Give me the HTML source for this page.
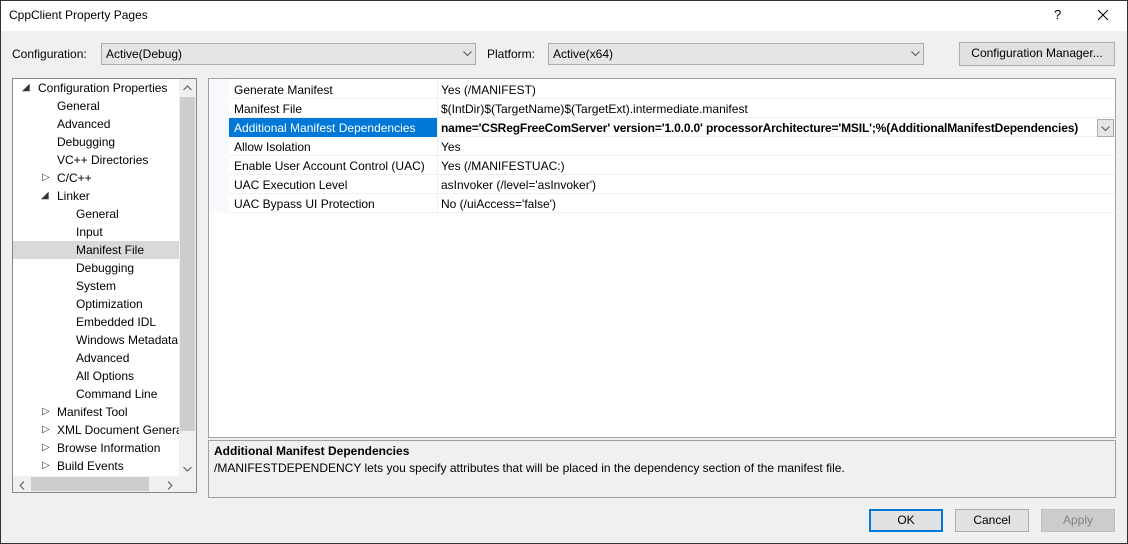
<!DOCTYPE html>
<html><head><style>
*{margin:0;padding:0;box-sizing:border-box}
body{width:1128px;height:544px;background:#f0f0f0;font-family:"Liberation Sans",sans-serif;font-size:12px;color:#000;position:relative;overflow:hidden}
.a{position:absolute;white-space:nowrap}
.win{position:absolute;left:0;top:0;width:1128px;height:544px;border:1px solid #333;}
.combo{position:absolute;background:#e5e5e5;border:1px solid #adadad;height:22px;padding:3px 4px}
.btn{position:absolute;background:#e1e1e1;border:1px solid #adadad;height:23px;text-align:center;line-height:21px}
.tree div{position:absolute;white-space:nowrap;height:18px;line-height:18px}
.row{position:absolute;left:229px;width:886px;height:19px;border-bottom:1px solid #f0f0f0;line-height:20px}
.row span{position:absolute;left:5px}
.row b{position:absolute;left:212px;font-weight:normal}
.tri{font-size:10px;color:#333}
</style></head><body>
<div class="win"></div>
<div class="a" style="left:1px;top:1px;width:1126px;height:30px;background:#fff"></div>
<div class="a" style="left:9px;top:8px;font-size:12px">CppClient Property Pages</div>
<div class="a" style="left:1054px;top:7px;font-size:13px">?</div>
<svg class="a" style="left:1097px;top:9px" width="12" height="12"><path d="M1 1L11 11M11 1L1 11" stroke="#000" stroke-width="1"/></svg>

<div class="a" style="left:12px;top:47px">Configuration:</div>
<div class="combo" style="left:101px;top:43px;width:375px">Active(Debug)</div>
<svg class="a" style="left:463px;top:51px" width="9" height="6"><path d="M0.5 0.5L4.5 4.5L8.5 0.5" stroke="#555" fill="none"/></svg>
<div class="a" style="left:487px;top:47px">Platform:</div>
<div class="combo" style="left:548px;top:43px;width:376px">Active(x64)</div>
<svg class="a" style="left:911px;top:51px" width="9" height="6"><path d="M0.5 0.5L4.5 4.5L8.5 0.5" stroke="#555" fill="none"/></svg>
<div class="btn" style="left:959px;top:42px;width:156px;height:24px">Configuration Manager...</div>

<div class="a" style="left:12px;top:78px;width:185px;height:415px;border:1px solid #828790;background:#fff"></div>
<div class="a" style="left:179px;top:79px;width:17px;height:397px;background:#f0f0f0"></div>
<div class="a" style="left:180px;top:97px;width:15px;height:334px;background:#cdcdcd"></div>
<svg class="a" style="left:183px;top:85px" width="9" height="6"><path d="M0.5 5L4.5 1L8.5 5" stroke="#555" fill="none"/></svg>
<svg class="a" style="left:183px;top:466px" width="9" height="6"><path d="M0.5 1L4.5 5L8.5 1" stroke="#555" fill="none"/></svg>
<div class="a" style="left:13px;top:476px;width:183px;height:16px;background:#f0f0f0"></div>
<div class="a" style="left:31px;top:477px;width:118px;height:14px;background:#cdcdcd"></div>
<svg class="a" style="left:19px;top:481px" width="6" height="9"><path d="M5 0.5L1 4.5L5 8.5" stroke="#555" fill="none"/></svg>
<svg class="a" style="left:167px;top:481px" width="6" height="9"><path d="M1 0.5L5 4.5L1 8.5" stroke="#555" fill="none"/></svg>
<div class="a" style="left:13px;top:241px;width:166px;height:18px;background:#d9d9d9"></div>
<div class="tree">
<div class="tri" style="left:22px;top:79px">◢</div><div style="left:38px;top:79px">Configuration Properties</div>
<div style="left:57px;top:97px">General</div>
<div style="left:57px;top:115px">Advanced</div>
<div style="left:57px;top:133px">Debugging</div>
<div style="left:57px;top:151px">VC++ Directories</div>
<div class="tri" style="left:42px;top:169px">▷</div><div style="left:57px;top:169px">C/C++</div>
<div class="tri" style="left:41px;top:187px">◢</div><div style="left:57px;top:187px">Linker</div>
<div style="left:76px;top:205px">General</div>
<div style="left:76px;top:223px">Input</div>
<div style="left:76px;top:241px">Manifest File</div>
<div style="left:76px;top:259px">Debugging</div>
<div style="left:76px;top:277px">System</div>
<div style="left:76px;top:295px">Optimization</div>
<div style="left:76px;top:313px">Embedded IDL</div>
<div style="left:76px;top:331px;width:103px;overflow:hidden">Windows Metadata</div>
<div style="left:76px;top:349px">Advanced</div>
<div style="left:76px;top:367px">All Options</div>
<div style="left:76px;top:385px">Command Line</div>
<div class="tri" style="left:42px;top:403px">▷</div><div style="left:57px;top:403px">Manifest Tool</div>
<div class="tri" style="left:42px;top:421px">▷</div><div style="left:57px;top:421px;width:122px;overflow:hidden">XML Document Generator</div>
<div class="tri" style="left:42px;top:439px">▷</div><div style="left:57px;top:439px">Browse Information</div>
<div class="tri" style="left:42px;top:457px">▷</div><div style="left:57px;top:457px">Build Events</div>
</div>

<div class="a" style="left:208px;top:78px;width:908px;height:360px;border:1px solid #a0a0a0;background:#fff"></div>
<div class="a" style="left:209px;top:79px;width:20px;height:134px;background:#f7f9fc"></div>
<div class="a" style="left:437px;top:80px;width:1px;height:133px;background:#f0f0f0"></div>
<div class="row" style="top:80px"><span>Generate Manifest</span><b>Yes (/MANIFEST)</b></div>
<div class="row" style="top:99px"><span>Manifest File</span><b>$(IntDir)$(TargetName)$(TargetExt).intermediate.manifest</b></div>
<div class="row" style="top:118px"><div class="a" style="left:0;top:0;width:208px;height:19px;background:#0078d7"></div><span style="color:#fff">Additional Manifest Dependencies</span><b style="font-weight:bold;letter-spacing:-0.15px">name='CSRegFreeComServer' version='1.0.0.0' processorArchitecture='MSIL';%(AdditionalManifestDependencies)</b></div>
<div class="a" style="left:1097px;top:119px;width:17px;height:18px;background:#e5e5e5;border:1px solid #adadad"></div>
<svg class="a" style="left:1101px;top:126px" width="9" height="6"><path d="M0.5 0.5L4.5 4.5L8.5 0.5" stroke="#555" fill="none"/></svg>
<div class="row" style="top:137px"><span>Allow Isolation</span><b>Yes</b></div>
<div class="row" style="top:156px"><span>Enable User Account Control (UAC)</span><b>Yes (/MANIFESTUAC:)</b></div>
<div class="row" style="top:175px"><span>UAC Execution Level</span><b>asInvoker (/level='asInvoker')</b></div>
<div class="row" style="top:194px"><span>UAC Bypass UI Protection</span><b>No (/uiAccess='false')</b></div>

<div class="a" style="left:208px;top:440px;width:908px;height:58px;border:1px solid #a0a0a0;background:#f0f0f0"></div>
<div class="a" style="left:214px;top:444px;font-weight:bold">Additional Manifest Dependencies</div>
<div class="a" style="left:214px;top:461px">/MANIFESTDEPENDENCY lets you specify attributes that will be placed in the dependency section of the manifest file.</div>

<div class="btn" style="left:869px;top:509px;width:74px;border:2px solid #0078d7;line-height:19px">OK</div>
<div class="btn" style="left:955px;top:509px;width:74px">Cancel</div>
<div class="btn" style="left:1041px;top:509px;width:74px;background:#cccccc;border-color:#bfbfbf;color:#838383">Apply</div>
</body></html>
